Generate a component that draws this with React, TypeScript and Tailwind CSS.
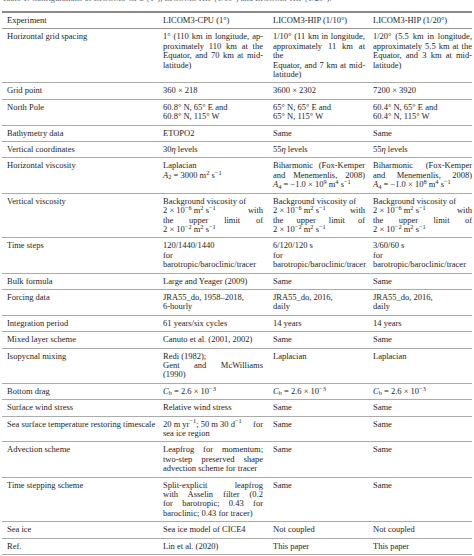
import type { ReactNode } from 'react';

type Line = { c: ReactNode; j?: boolean; split?: [ReactNode, ReactNode] };
type Row = { label: string; cells: Line[][] };

const L = (c: ReactNode, j = false): Line => ({ c, j });
const one = (c: ReactNode): Line[] => [L(c)];
// a line whose last word is pushed to the right edge
const S = (a: ReactNode, b: ReactNode): Line => ({ c: null, split: [a, b] });

const I = ({ children }: { children: ReactNode }) => <i>{children}</i>;

const rows: Row[] = [
  {
    label: 'Horizontal grid spacing',
    cells: [
      [
        L(<>1° (110 km in longitude, ap-</>, true),
        L(<>proximately 110 km at the</>, true),
        L(<>Equator, and 70 km at mid-</>, true),
        L('latitude)'),
      ],
      [
        L(<>1/10° (11 km in longitude,</>, true),
        L(<>approximately 11 km at the</>, true),
        L(<>Equator, and 7 km at mid-</>, true),
        L('latitude)'),
      ],
      [
        L(<>1/20° (5.5 km in longitude,</>, true),
        L(<>approximately 5.5 km at the</>, true),
        L(<>Equator, and 3 km at mid-</>, true),
        L('latitude)'),
      ],
    ],
  },
  { label: 'Grid point', cells: [one('360 × 218'), one('3600 × 2302'), one('7200 × 3920')] },
  {
    label: 'North Pole',
    cells: [
      [L('60.8° N, 65° E and'), L('60.8° N, 115° W')],
      [L('65° N, 65° E and'), L('65° N, 115° W')],
      [L('60.4° N, 65° E and'), L('60.4° N, 115° W')],
    ],
  },
  { label: 'Bathymetry data', cells: [one('ETOPO2'), one('Same'), one('Same')] },
  {
    label: 'Vertical coordinates',
    cells: [
      one(<>30<I>η</I> levels</>),
      one(<>55<I>η</I> levels</>),
      one(<>55<I>η</I> levels</>),
    ],
  },
  {
    label: 'Horizontal viscosity',
    cells: [
      [
        L('Laplacian'),
        L(<><I>A</I><sub>2</sub> = 3000 m<sup>2</sup> s<sup>−1</sup></>),
      ],
      [
        L('Biharmonic (Fox-Kemper', true),
        L('and Menemenlis, 2008)', true),
        L(<><I>A</I><sub>4</sub> = −1.0 × 10<sup>9</sup> m<sup>4</sup> s<sup>−1</sup></>),
      ],
      [
        L('Biharmonic (Fox-Kemper', true),
        L('and Menemenlis, 2008)', true),
        L(<><I>A</I><sub>4</sub> = −1.0 × 10<sup>8</sup> m<sup>4</sup> s<sup>−1</sup></>),
      ],
    ],
  },
  {
    label: 'Vertical viscosity',
    cells: [0, 1, 2].map(() => [
      L('Background viscosity of'),
      S(<>2 × 10<sup>−6</sup> m<sup>2</sup> s<sup>−1</sup></>, 'with'),
      L('the upper limit of', true),
      L(<>2 × 10<sup>−2</sup> m<sup>2</sup> s<sup>−1</sup></>),
    ]),
  },
  {
    label: 'Time steps',
    cells: [
      [L('120/1440/1440'), L('for'), L('barotropic/baroclinic/tracer')],
      [L('6/120/120 s'), L('for'), L('barotropic/baroclinic/tracer')],
      [L('3/60/60 s'), L('for'), L('barotropic/baroclinic/tracer')],
    ],
  },
  { label: 'Bulk formula', cells: [one('Large and Yeager (2009)'), one('Same'), one('Same')] },
  {
    label: 'Forcing data',
    cells: [
      [L('JRA55_do, 1958–2018,'), L('6-hourly')],
      [L('JRA55_do, 2016,'), L('daily')],
      [L('JRA55_do, 2016,'), L('daily')],
    ],
  },
  { label: 'Integration period', cells: [one('61 years/six cycles'), one('14 years'), one('14 years')] },
  { label: 'Mixed layer scheme', cells: [one('Canuto et al. (2001, 2002)'), one('Same'), one('Same')] },
  {
    label: 'Isopycnal mixing',
    cells: [
      [L('Redi (1982);'), L('Gent and McWilliams', true), L('(1990)')],
      one('Laplacian'),
      one('Laplacian'),
    ],
  },
  {
    label: 'Bottom drag',
    cells: [0, 1, 2].map(() =>
      one(<><I>C</I><sub>b</sub> = 2.6 × 10<sup>−3</sup></>),
    ),
  },
  { label: 'Surface wind stress', cells: [one('Relative wind stress'), one('Same'), one('Same')] },
  {
    label: 'Sea surface temperature restoring timescale',
    cells: [
      [
        S(<>20 m yr<sup>−1</sup>; 50 m 30 d<sup>−1</sup></>, 'for'),
        L('sea ice region'),
      ],
      one('Same'),
      one('Same'),
    ],
  },
  {
    label: 'Advection scheme',
    cells: [
      [
        L('Leapfrog for momentum;', true),
        L('two-step preserved shape', true),
        L('advection scheme for tracer'),
      ],
      one('Same'),
      one('Same'),
    ],
  },
  {
    label: 'Time stepping scheme',
    cells: [
      [
        L('Split-explicit leapfrog', true),
        L('with Asselin filter (0.2', true),
        L('for barotropic; 0.43 for', true),
        L('baroclinic; 0.43 for tracer)'),
      ],
      one('Same'),
      one('Same'),
    ],
  },
  { label: 'Sea ice', cells: [one('Sea ice model of CICE4'), one('Not coupled'), one('Not coupled')] },
  { label: 'Ref.', cells: [one('Lin et al. (2020)'), one('This paper'), one('This paper')] },
];

const cellPad = [
  'pl-[5px]',
  'pl-[6px] pr-[4px]',
  'pl-[6px] pr-[2px]',
  'pl-[6px] pr-0',
];

function Cell({ lines, col }: { lines: Line[]; col: number }) {
  return (
    <td className={`align-top py-[3px] ${cellPad[col]}`}>
      {lines.map((ln, i) =>
        ln.split ? (
          <div key={i} className="flex justify-between">
            <span>{ln.split[0]}</span>
            <span>{ln.split[1]}</span>
          </div>
        ) : (
          <div
            key={i}
            className={ln.j ? 'text-justify [text-align-last:justify]' : 'text-left'}
          >
            {ln.c}
          </div>
        ),
      )}
    </td>
  );
}

export default function App() {
  return (
    <div
      className="w-[474px] h-[556px] overflow-hidden bg-white text-[#1e1e1e] text-[8.5px] leading-[9.4px]"
      style={{ fontFamily: '"Liberation Serif", "Times New Roman", serif' }}
    >
      {/* caption, cut off at the top edge */}
      <div className="h-[3px] overflow-hidden flex flex-col justify-end pl-[2px] text-[#666]">
        <div className="whitespace-nowrap">
          Table 1. Configurations of LICOM3-CPU (1°), LICOM3-HIP (1/10°) and LICOM3-HIP (1/20°).
        </div>
      </div>

      <table className="mt-[8px] ml-[2px] w-[470px] table-fixed border-collapse">
        <colgroup>
          <col className="w-[155px]" />
          <col className="w-[110px]" />
          <col className="w-[100px]" />
          <col className="w-[105px]" />
        </colgroup>
        <thead>
          <tr className="border-t-2 border-t-[#8a8a8a] border-b border-b-[#959595]">
            <Cell col={0} lines={one('Experiment')} />
            <Cell col={1} lines={one('LICOM3-CPU (1°)')} />
            <Cell col={2} lines={one('LICOM3-HIP (1/10°)')} />
            <Cell col={3} lines={one('LICOM3-HIP (1/20°)')} />
          </tr>
        </thead>
        <tbody>
          {rows.map((r) => (
            <tr key={r.label} className="border-b border-[#ababab]">
              <Cell col={0} lines={one(r.label)} />
              {r.cells.map((c, idx) => (
                <Cell key={idx} col={idx + 1} lines={c} />
              ))}
            </tr>
          ))}
        </tbody>
      </table>
    </div>
  );
}
